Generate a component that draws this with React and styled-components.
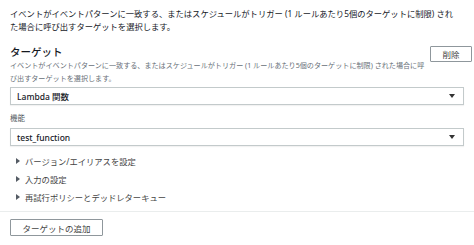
import React from "react";
import styled, { createGlobalStyle } from "styled-components";

const Global = createGlobalStyle`
  html, body { margin: 0; padding: 0; background: #fff; }
  body { font-family: "Noto Sans", "Noto Sans CJK JP", sans-serif; }
`;

const Page = styled.div`
  width: 474px;
  padding-top: 7px;
`;

const Section = styled.div`
  padding: 0 2px 0 10px;
`;

const Intro = styled.p`
  margin: 0;
  font-size: 8.3px;
  line-height: 13px;
  color: #16191f;
  width: 450px;
`;

const Header = styled.div`
  display: flex;
  justify-content: space-between;
  align-items: flex-start;
  margin-top: 13px;
`;

const HeaderText = styled.div`
  width: 418px;
`;

const Title = styled.h2`
  margin: 0;
  font-size: 10.5px;
  line-height: 13px;
  font-weight: 500;
  color: #16191f;
`;

const Desc = styled.p`
  margin: 0;
  font-size: 7.1px;
  line-height: 12.5px;
  color: #687078;
`;

const Button = styled.button`
  box-sizing: border-box;
  width: ${(p) => p.$w}px;
  height: ${(p) => p.$h}px;
  padding: 0;
  background: #fff;
  border: 1px solid #8f979c;
  border-radius: 1px;
  font-family: inherit;
  font-size: 8.5px;
  color: #444;
  display: flex;
  align-items: center;
  justify-content: center;
`;

const Select = styled.div`
  box-sizing: border-box;
  height: 18px;
  margin-top: ${(p) => p.$mt}px;
  margin-right: 8px;
  border: 1px solid #c3cacb;
  box-shadow: 0 1px 1px rgba(0, 0, 0, 0.05);
  display: flex;
  align-items: center;
  justify-content: space-between;
  padding: 0 8px 0 6px;
  font-size: 8.5px;
  font-weight: 500;
  color: #16191f;
`;

const Caret = styled.span`
  width: 0;
  height: 0;
  border-left: 3px solid transparent;
  border-right: 3px solid transparent;
  border-top: 4px solid #333;
`;

const Label = styled.div`
  margin-top: 7px;
  font-size: 7.5px;
  line-height: 12px;
  color: #545b64;
`;

const Expanders = styled.div`
  margin-top: 6px;
  display: flex;
  flex-direction: column;
`;

const Expander = styled.div`
  height: 18px;
  display: flex;
  align-items: center;
  gap: 5px;
  padding-left: 6px;
  font-size: 8.3px;
  color: #444;
`;

const Arrow = styled.span`
  width: 0;
  height: 0;
  border-top: 3px solid transparent;
  border-bottom: 3px solid transparent;
  border-left: 4px solid #545b64;
`;

const Footer = styled.div`
  margin-top: 5px;
  border-top: 1px solid #eaeded;
  padding: 7px 10px 0;
`;

export default function App() {
  return (
    <Page>
      <Global />
      <Section>
        <Intro>
          イベントがイベントパターンに一致する、またはスケジュールがトリガー (1 ルールあたり5個のターゲットに制限) された場合に呼び出すターゲットを選択します。
        </Intro>
        <Header>
          <HeaderText>
            <Title>ターゲット</Title>
            <Desc>
              イベントがイベントパターンに一致する、またはスケジュールがトリガー (1 ルールあたり5個のターゲットに制限) された場合に呼び出すターゲットを選択します。
            </Desc>
          </HeaderText>
          <Button $w={42} $h={16}>削除</Button>
        </Header>
        <Select $mt={3}>
          <span>Lambda 関数</span>
          <Caret />
        </Select>
        <Label>機能</Label>
        <Select $mt={4}>
          <span>test_function</span>
          <Caret />
        </Select>
        <Expanders>
          <Expander><Arrow />バージョン/エイリアスを設定</Expander>
          <Expander><Arrow />入力の設定</Expander>
          <Expander><Arrow />再試行ポリシーとデッドレターキュー</Expander>
        </Expanders>
      </Section>
      <Footer>
        <Button $w={93} $h={17}>ターゲットの追加</Button>
      </Footer>
    </Page>
  );
}
